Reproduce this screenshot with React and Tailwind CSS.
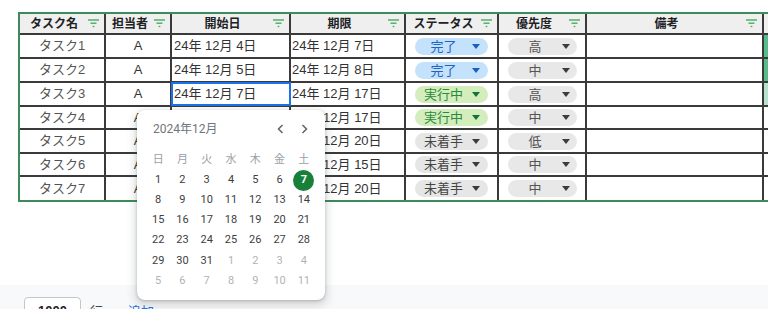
import { useState } from 'react'

const cols = [
  { key: 'name', label: 'タスク名', w: 'w-[86px]' },
  { key: 'owner', label: '担当者', w: 'w-[66px]' },
  { key: 'start', label: '開始日', w: 'w-[119px]' },
  { key: 'due', label: '期限', w: 'w-[115px]' },
  { key: 'status', label: 'ステータス', w: 'w-[93px]' },
  { key: 'prio', label: '優先度', w: 'w-[88px]' },
  { key: 'note', label: '備考', w: 'w-[177px]' },
]

const rows = [
  { name: 'タスク1', owner: 'A', start: '24年 12月 4日', due: '24年 12月 7日', status: '完了', prio: '高', h: 'h-[24px]', strip: 'bg-[#57bb8a]' },
  { name: 'タスク2', owner: 'A', start: '24年 12月 5日', due: '24年 12月 8日', status: '完了', prio: '中', h: 'h-[24px]', strip: 'bg-[#57bb8a]' },
  { name: 'タスク3', owner: 'A', start: '24年 12月 7日', due: '24年 12月 17日', status: '実行中', prio: '高', h: 'h-[24px]', strip: 'bg-[#b7e1cd]', selected: true },
  { name: 'タスク4', owner: 'A', start: '24年 12月 9日', due: '24年 12月 17日', status: '実行中', prio: '中', h: 'h-[23px]', strip: 'bg-white' },
  { name: 'タスク5', owner: 'A', start: '24年 12月 10日', due: '24年 12月 20日', status: '未着手', prio: '低', h: 'h-[24px]', strip: 'bg-white' },
  { name: 'タスク6', owner: 'A', start: '24年 12月 11日', due: '24年 12月 15日', status: '未着手', prio: '中', h: 'h-[23px]', strip: 'bg-white' },
  { name: 'タスク7', owner: 'A', start: '24年 12月 12日', due: '24年 12月 20日', status: '未着手', prio: '中', h: 'h-[23px]', strip: 'bg-white' },
]

const statusStyle = {
  完了: { pill: 'bg-[#c4e2fb] text-[#2163c4]', tri: 'border-t-[#1a5fc0]' },
  実行中: { pill: 'bg-[#d4edbc] text-[#2a8a3e]', tri: 'border-t-[#16703a]' },
  未着手: { pill: 'bg-[#e6e6e6] text-[#444444]', tri: 'border-t-[#3c3c3c]' },
}

const weeks = [
  [1, 2, 3, 4, 5, 6, 7],
  [8, 9, 10, 11, 12, 13, 14],
  [15, 16, 17, 18, 19, 20, 21],
  [22, 23, 24, 25, 26, 27, 28],
  [29, 30, 31, 1, 2, 3, 4],
  [5, 6, 7, 8, 9, 10, 11],
]

function FilterIcon() {
  return (
    <svg width="11" height="9" viewBox="0 0 11 9" className="shrink-0">
      <line x1="0" y1="1" x2="11" y2="1" stroke="#3aa757" strokeWidth="1.3" />
      <line x1="2.5" y1="4.2" x2="8.5" y2="4.2" stroke="#3aa757" strokeWidth="1.3" />
      <line x1="4.7" y1="7.5" x2="6.3" y2="7.5" stroke="#3aa757" strokeWidth="1.3" />
    </svg>
  )
}

function Tri({ color }) {
  return <span className={`w-0 h-0 border-l-[4px] border-r-[4px] border-t-[5px] border-l-transparent border-r-transparent ${color}`} />
}

function Chip({ label, pill, tri, wide }) {
  return (
    <div className={`flex items-center h-[17px] rounded-full ${pill} ${wide ? 'w-[73px] ml-[9px] pr-[8px]' : 'w-[69px] ml-[9px] pr-[7px]'}`}>
      <span className="flex-1 text-center text-[13px] leading-none">{label}</span>
      <Tri color={tri} />
    </div>
  )
}

function Calendar() {
  return (
    <div className="absolute left-[137px] top-[110px] w-[188px] h-[190px] bg-white rounded-lg shadow-[0_1px_3px_rgba(60,64,67,0.3),0_4px_8px_3px_rgba(60,64,67,0.15)] px-[9px] pt-[12px] z-10"
      style={{ fontFamily: 'Roboto, "Noto Sans CJK JP", sans-serif' }}>
      <div className="flex items-center h-[14px] pl-[7px]">
        <span className="flex-1 text-[12px] text-[#70757a]">2024年12月</span>
        <svg width="7" height="10" viewBox="0 0 7 10" className="mr-[17px]">
          <path d="M5.5 1 L1.5 5 L5.5 9" fill="none" stroke="#5f6368" strokeWidth="1.5" />
        </svg>
        <svg width="7" height="10" viewBox="0 0 7 10" className="mr-[8px]">
          <path d="M1.5 1 L5.5 5 L1.5 9" fill="none" stroke="#5f6368" strokeWidth="1.5" />
        </svg>
      </div>
      <div className="grid grid-cols-7 mt-[14px] h-[20px] items-center text-[11px] text-[#9aa0a6] text-center">
        {['日', '月', '火', '水', '木', '金', '土'].map((d) => <span key={d}>{d}</span>)}
      </div>
      {weeks.map((w, wi) => (
        <div key={wi} className="grid grid-cols-7 h-[20.2px] items-center text-center text-[11px]">
          {w.map((d, di) => {
            const other = (wi === 4 && di > 2) || wi === 5
            const sel = wi === 0 && d === 7
            return (
              <div key={di} className="flex justify-center">
                {sel ? (
                  <span className="w-[21px] h-[21px] rounded-full bg-[#188038] text-white font-bold flex items-center justify-center">{d}</span>
                ) : (
                  <span className={other ? 'text-[#b0b4b8]' : 'text-[#3c4043]'}>{d}</span>
                )}
              </div>
            )
          })}
        </div>
      ))}
    </div>
  )
}

export default function App() {
  const [selected] = useState(2)

  return (
    <div className="relative w-[768px] h-[309px] overflow-hidden bg-white"
      style={{ fontFamily: '"Liberation Sans", "Noto Sans CJK JP", sans-serif' }}>
      <div className="pt-[12px] pl-[18px]">
        <div className="border-t-2 border-b-2 border-l-2 border-[#3d8a5a]">
          {/* header */}
          <div className="flex h-[21px] bg-[#efefef]">
            {cols.map((c) => (
              <div key={c.key} className={`${c.w} shrink-0 flex items-center border-r-2 border-b-2 border-[#3a3a3a] pr-[5px]`}>
                <span className="flex-1 text-center text-[12px] font-bold text-[#202124]">{c.label}</span>
                <FilterIcon />
              </div>
            ))}
            <div className="w-[4px] border-b-2 border-[#3a3a3a] bg-[#efefef]" />
          </div>
          {/* rows */}
          {rows.map((r, i) => (
            <div key={r.name} className={`flex ${r.h}`}>
              <div className={`${cols[0].w} shrink-0 flex items-center justify-center border-r-2 ${i < rows.length - 1 ? 'border-b-2' : ''} border-[#3a3a3a] text-[13px] text-[#555555]`}>{r.name}</div>
              <div className={`${cols[1].w} shrink-0 flex items-center justify-center border-r-2 ${i < rows.length - 1 ? 'border-b-2' : ''} border-[#3a3a3a] text-[13px] text-[#333333]`}>{r.owner}</div>
              <div className={`${cols[2].w} shrink-0 relative flex items-center border-r-2 ${i < rows.length - 1 ? 'border-b-2' : ''} border-[#3a3a3a] pl-[2px] text-[13px] text-[#333333]`}>
                {r.start}
                {i === selected && <div className="absolute -left-[1px] -top-[1px] -right-[2px] -bottom-[1px] border-2 border-[#1a73e8]" />}
              </div>
              <div className={`${cols[3].w} shrink-0 flex items-center border-r-2 ${i < rows.length - 1 ? 'border-b-2' : ''} border-[#3a3a3a] pl-[1px] text-[13px] text-[#333333]`}>{r.due}</div>
              <div className={`${cols[4].w} shrink-0 flex items-center border-r-2 ${i < rows.length - 1 ? 'border-b-2' : ''} border-[#3a3a3a]`}>
                <Chip label={r.status} pill={statusStyle[r.status].pill} tri={statusStyle[r.status].tri} wide />
              </div>
              <div className={`${cols[5].w} shrink-0 flex items-center border-r-2 ${i < rows.length - 1 ? 'border-b-2' : ''} border-[#3a3a3a]`}>
                <Chip label={r.prio} pill="bg-[#e8e8e8] text-[#555555]" tri="border-t-[#3c3c3c]" />
              </div>
              <div className={`${cols[6].w} shrink-0 border-r-2 ${i < rows.length - 1 ? 'border-b-2' : ''} border-[#3a3a3a]`} />
              <div className={`w-[4px] ${r.strip} ${i < rows.length - 1 ? 'border-b-2 border-[#3a3a3a]' : ''}`} />
            </div>
          ))}
        </div>
      </div>

      {/* bottom bar */}
      <div className="mt-[83px] h-[40px] bg-[#f8f9fa] flex items-start pt-[12px] pl-[24px]">
        <div className="w-[57px] h-[28px] border border-[#c4c7c5] rounded-[4px] bg-white flex items-center justify-center text-[13px] font-bold text-[#202124]">1000</div>
        <span className="ml-[9px] mt-[5px] text-[13px] text-[#444746]">行</span>
        <span className="ml-[25px] mt-[5px] text-[13px] text-[#1a73e8]">追加</span>
      </div>

      <Calendar />
    </div>
  )
}
